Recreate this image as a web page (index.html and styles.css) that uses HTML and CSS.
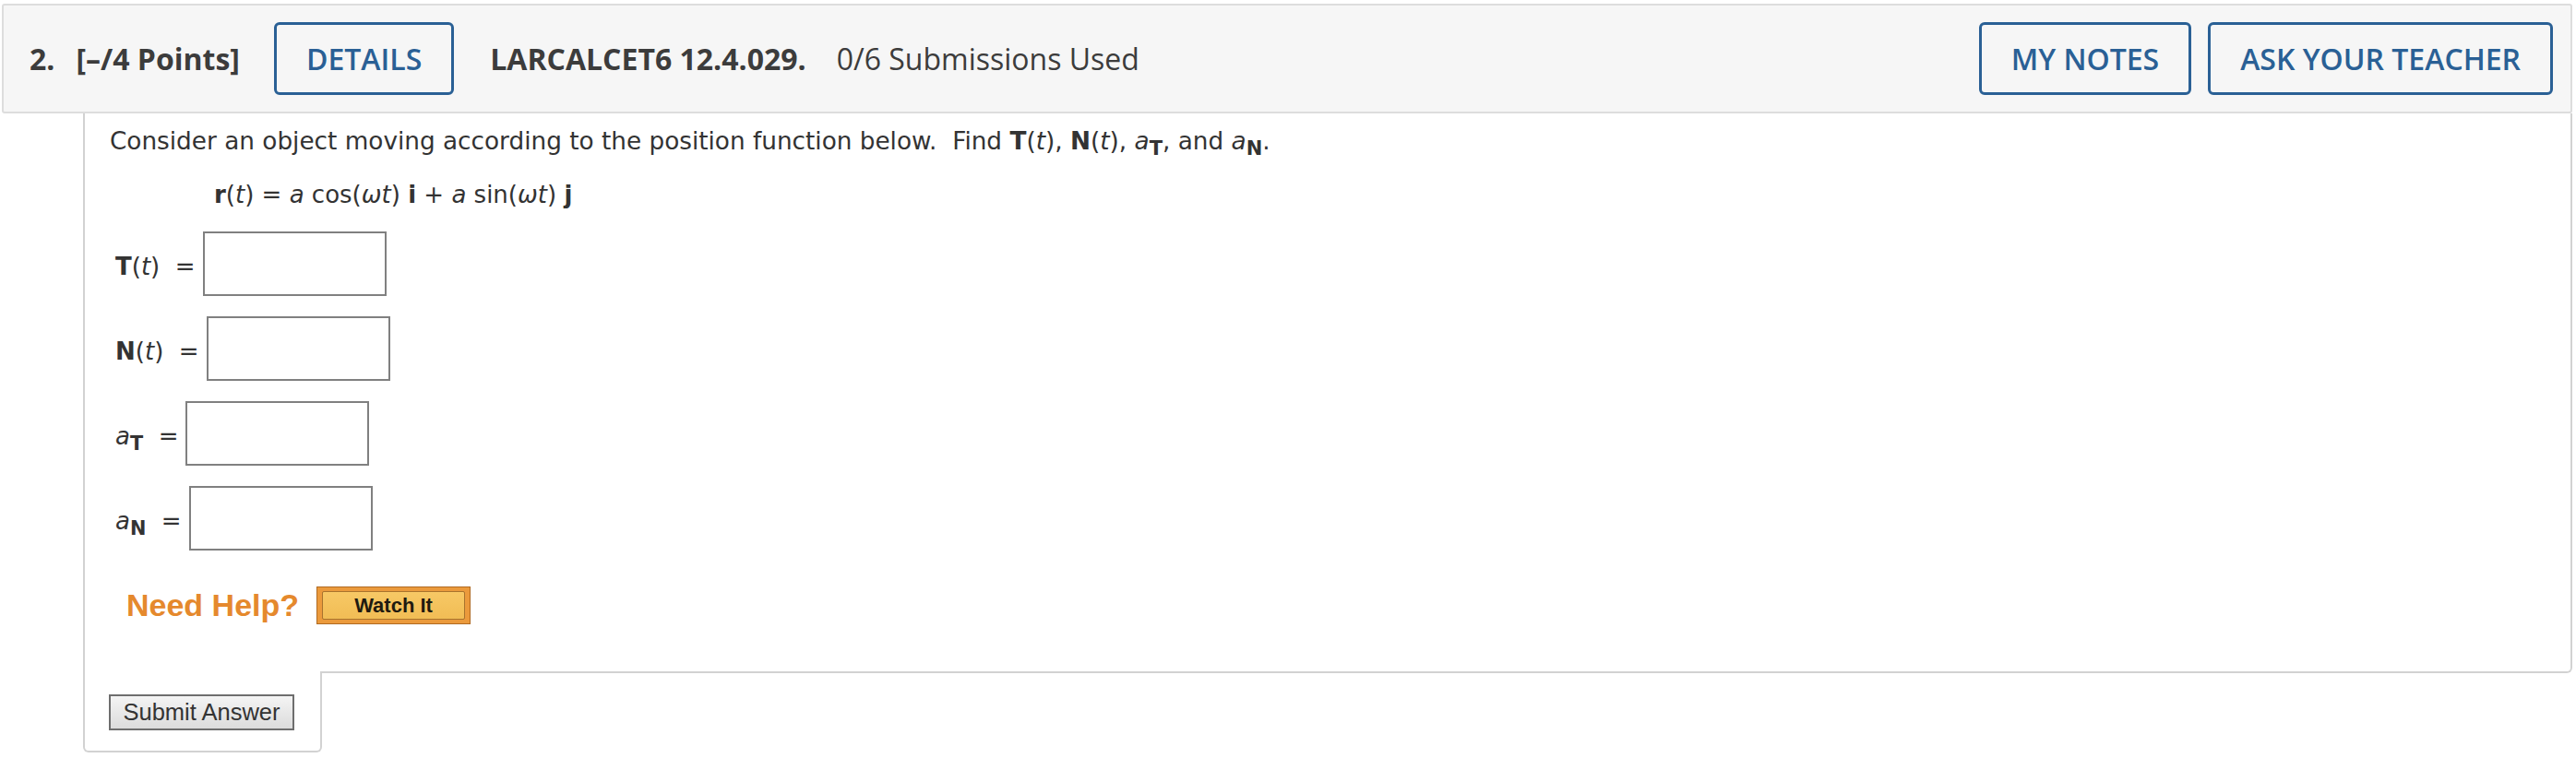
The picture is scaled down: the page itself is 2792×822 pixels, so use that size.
FILE: index.html
```html
<!DOCTYPE html>
<html>
<head>
<meta charset="utf-8">
<link rel="stylesheet" href="styles.css">
</head>
<body>
<div class="page">
  <div class="qhead">
    <div class="qhead-left">
      <span class="qnum">2.</span>
      <span class="qpts">[–/4 Points]</span>
      <button class="obtn details">DETAILS</button>
      <span class="qref">LARCALCET6 12.4.029.</span>
      <span class="qsubs">0/6 Submissions Used</span>
    </div>
    <div class="qhead-right">
      <button class="obtn">MY NOTES</button>
      <button class="obtn">ASK YOUR TEACHER</button>
    </div>
  </div>
  <div class="qbody">
    <p class="prompt">Consider an object moving according to the position function below.&nbsp; Find <b>T</b>(<i>t</i>), <b>N</b>(<i>t</i>), <i>a</i><sub><b>T</b></sub>, and <i>a</i><sub><b>N</b></sub>.</p>
    <p class="formula"><b>r</b>(<i>t</i>) = <i>a</i> cos(<i>ωt</i>) <b>i</b> + <i>a</i> sin(<i>ωt</i>) <b>j</b></p>
    <div class="answers">
      <div class="arow"><span class="alabel"><b>T</b>(<i>t</i>) &nbsp;=</span><span class="abox"></span></div>
      <div class="arow"><span class="alabel"><b>N</b>(<i>t</i>) &nbsp;=</span><span class="abox"></span></div>
      <div class="arow"><span class="alabel"><i>a</i><sub><b>T</b></sub> &nbsp;=</span><span class="abox"></span></div>
      <div class="arow"><span class="alabel"><i>a</i><sub><b>N</b></sub> &nbsp;=</span><span class="abox"></span></div>
    </div>
    <div class="help">
      <span class="needhelp">Need Help?</span>
      <span class="watch"><span class="watch-inner">Watch It</span></span>
    </div>
  </div>
  <div class="qfoot">
    <button class="submit">Submit Answer</button>
  </div>
</div>
</body>
</html>
```
FILE: styles.css
```css
html, body {
  margin: 0;
  padding: 0;
  background: #ffffff;
}
.page {
  padding: 4px 4px 0 2px;
}
.qhead {
  display: flex;
  align-items: center;
  justify-content: space-between;
  background: #f6f6f6;
  border: 2px solid #dddddd;
  border-radius: 3px;
  padding: 18px 19px 18px 28px;
  font-family: "Open Sans", sans-serif;
  color: #3c3c3c;
}
.qhead-left, .qhead-right {
  display: flex;
  align-items: center;
}
.qhead-right {
  gap: 18px;
}
.qnum {
  font-size: 32px;
  font-weight: 700;
  margin-right: 23px;
}
.qpts {
  font-size: 32px;
  font-weight: 700;
  margin-right: 37px;
}
.qref {
  font-size: 32px;
  font-weight: 700;
  margin-left: 39px;
  margin-right: 33px;
}
.qsubs {
  font-size: 32px;
  font-weight: 400;
}
.obtn {
  font-family: "Open Sans", sans-serif;
  font-size: 32px;
  font-weight: 600;
  color: #2a6095;
  background: transparent;
  border: 3px solid #2a6095;
  border-radius: 6px;
  height: 79px;
  padding: 0 32px;
  margin: 0;
  line-height: 1;
}
.qbody {
  margin-left: 88px;
  border-left: 2px solid #d2d2d2;
  border-right: 2px solid #d2d2d2;
  border-bottom: 2px solid #d2d2d2;
  border-bottom-right-radius: 6px;
  padding: 15px 0 0 27px;
  height: 590px;
  font-family: "DejaVu Sans", Verdana, sans-serif;
  color: #333333;
}
.prompt {
  margin: 0;
  font-size: 26.3px;
  line-height: 30px;
}
.prompt sub, .alabel sub {
  font-size: 80%;
  vertical-align: -0.3em;
  line-height: 0;
}
.formula {
  margin: 28px 0 0 113px;
  font-size: 26px;
  line-height: 30px;
}
.answers {
  margin-top: 25px;
  margin-left: 6px;
  display: flex;
  flex-direction: column;
  gap: 22px;
}
.arow {
  display: flex;
  align-items: center;
  gap: 8px;
}
.alabel {
  font-size: 26px;
  line-height: 30px;
  padding-top: 6px;
}
.abox {
  display: block;
  width: 195px;
  height: 66px;
  border: 2px solid #808080;
  background: #ffffff;
}
.help {
  display: flex;
  align-items: center;
  margin-top: 39px;
  margin-left: 18px;
  gap: 19px;
}
.needhelp {
  font-family: "Liberation Sans", Arial, sans-serif;
  font-weight: 700;
  font-size: 34px;
  color: #e5892d;
}
.watch {
  display: flex;
  width: 167px;
  height: 41px;
  box-sizing: border-box;
  border: 1px solid #b06a22;
  background: #eb9a3c;
  padding: 4px 5px;
}
.watch-inner {
  flex: 1;
  display: flex;
  align-items: center;
  justify-content: center;
  border: 1px solid #a8732e;
  border-radius: 2px;
  background: linear-gradient(#f7c865, #f1bd55);
  font-family: "Liberation Sans", Arial, sans-serif;
  font-weight: 700;
  font-size: 22px;
  color: #1f1a10;
}
.qfoot {
  position: relative;
  margin-left: 88px;
  margin-top: -2px;
  background: #ffffff;
  border-left: 2px solid #d2d2d2;
  border-right: 2px solid #d2d2d2;
  border-bottom: 2px solid #d2d2d2;
  border-radius: 0 0 6px 6px;
  padding: 25px 0 0 26px;
  box-sizing: border-box;
  height: 88px;
  width: 259px;
}
.submit {
  width: 201px;
  height: 39px;
  border: 2px solid #6e6e6e;
  background: linear-gradient(#f4f4f4, #dcdcdc);
  font-family: "Liberation Sans", Arial, sans-serif;
  font-size: 25.5px;
  color: #333333;
  padding: 0;
  margin: 0;
}
```
